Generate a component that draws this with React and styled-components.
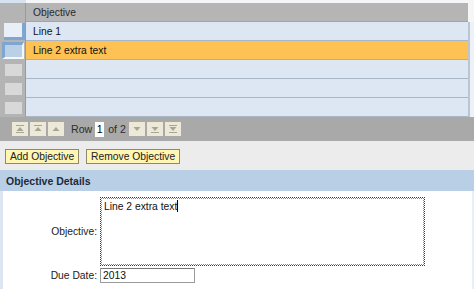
import React from "react";
import styled, { createGlobalStyle } from "styled-components";

const Global = createGlobalStyle`
  html, body { margin: 0; padding: 0; background: #ffffff; }
  body { font-family: "Liberation Sans", Arial, sans-serif; font-size: 10.3px; color: #000; }
`;

const Page = styled.div`
  width: 474px;
  height: 289px;
  overflow: hidden;
  display: flex;
  flex-direction: column;
  background: #fff;
`;

const TableWrap = styled.div`
  display: grid;
  grid-template-columns: 468px 1fr;
`;

const Table = styled.div`
  display: flex;
  flex-direction: column;
`;

const TopStrip = styled.div`
  height: 3px;
  display: grid;
  grid-template-columns: 26px 1fr;
  & > span:first-child { background: #d6e2ef; }
  & > span:last-child { background: #f4f6f8; }
`;

const Row = styled.div`
  display: grid;
  grid-template-columns: 26px 1fr;
  height: 19px;
`;

const Selector = styled.div`
  background: #b4b4b4;
  border-right: 1px solid #9a9a9a;
  display: flex;
  align-items: center;
  justify-content: flex-start;
  padding-left: 4px;
`;

const SelBox = styled.div`
  box-sizing: border-box;
  width: ${(p) => (p.$kind === "empty" ? "17px" : "22px")};
  height: ${(p) => (p.$kind === "empty" ? "12px" : "17px")};
  margin-left: ${(p) => (p.$kind === "empty" ? "1px" : p.$kind === "sel" ? "-2px" : "0")};
  background: ${(p) =>
    p.$kind === "empty" ? "#d8d8d8" : p.$kind === "sel" ? "#b9d0e6" : "#e9eff7"};
  border-right: ${(p) => (p.$kind === "first" ? "3px solid #7ea6d1" : p.$kind === "sel" ? "2px solid #f4f8fc" : "none")};
  border-bottom: ${(p) => (p.$kind === "first" ? "3px solid #7ea6d1" : p.$kind === "sel" ? "2px solid #f4f8fc" : "none")};
  border-left: ${(p) => (p.$kind === "sel" ? "3px solid #7ea6d1" : "none")};
  border-top: ${(p) => (p.$kind === "sel" ? "3px solid #7ea6d1" : "none")};
`;

const HeaderCell = styled.div`
  background: #b5b5b5;
  color: #2a2a2a;
  display: flex;
  align-items: center;
  padding-left: 7px;
  border-bottom: 1px solid #a4a4a4;
`;

const Cell = styled.div`
  background: ${(p) => (p.$selected ? "#fdc253" : "#dde7f4")};
  border-bottom: 1px solid ${(p) => (p.$selected ? "#e0a944" : "#a9b6c6")};
  display: flex;
  align-items: center;
  padding-left: 7px;
  color: #111;
`;

const RightEdge = styled.div`
  display: flex;
  flex-direction: column;
  & > div:first-child { height: 22px; background: #f6f6f6; }
  & > div:last-child { flex: 1; background: #eef2f7; border-left: 2px solid #b9c5d3; }
`;

const Toolbar = styled.div`
  height: 24px;
  background: #a9a9a9;
  display: flex;
  align-items: center;
  padding-left: 12px;
  gap: 2px;
  color: #2e2e2e;
`;

const NavBtn = styled.div`
  width: 16px;
  height: 14px;
  background: #ece9d8;
  display: flex;
  align-items: center;
  justify-content: center;
`;

const RowLabel = styled.span`
  margin-left: 5px;
  margin-right: 1px;
  font-size: 10.6px;
`;

const RowInput = styled.span`
  background: #fff;
  width: 9px;
  height: 15px;
  display: inline-flex;
  align-items: center;
  justify-content: center;
  color: #000;
  font-size: 10.6px;
`;

const OfLabel = styled.span`
  margin-left: 2px;
  margin-right: 1px;
  font-size: 10.6px;
`;

const ActionBar = styled.div`
  height: 29px;
  background: #ececec;
  display: flex;
  align-items: center;
  padding-left: 5px;
  padding-top: 2px;
  box-sizing: border-box;
  gap: 7px;
`;

const ActionButton = styled.div`
  height: 13px;
  padding: 0 4px;
  background: #fff5b4;
  border: 1px solid #8d8a6c;
  display: flex;
  align-items: center;
  color: #222;
  font-size: 10.3px;
  line-height: 13px;
`;

const SectionHeader = styled.div`
  height: 21px;
  background: #b9cfe6;
  display: flex;
  align-items: center;
  padding-left: 6px;
  font-weight: bold;
  font-size: 10.5px;
  color: #1d2b3c;
`;

const Form = styled.div`
  flex: 1;
  border-left: 3px solid #dbe6f1;
  border-right: 2px solid #e8eef5;
  display: grid;
  grid-template-columns: 94px auto 1fr;
  grid-template-rows: auto auto;
  align-content: start;
  column-gap: 3px;
  row-gap: 2px;
  padding-top: 6px;
  align-items: center;
`;

const Label = styled.div`
  grid-column: 1;
  text-align: right;
  color: #222;
`;

const TextArea = styled.div`
  grid-column: 2;
  box-sizing: border-box;
  width: 325px;
  height: 69px;
  border: 1px dotted #3a3a3a;
  outline: 1px dotted #8a8a8a;
  outline-offset: -2px;
  padding: 2px 3px;
  color: #111;
`;

const Caret = styled.span`
  display: inline-block;
  width: 1px;
  height: 12px;
  background: #000;
  vertical-align: -2px;
`;

const DateInput = styled.div`
  grid-column: 2;
  box-sizing: border-box;
  width: 95px;
  height: 15px;
  border: 1px solid #9b9b9b;
  border-top-color: #7a7a7a;
  padding: 0 2px;
  line-height: 13px;
  color: #111;
`;

const Arrow = ({ dir, bars }) => {
  const up = dir === "up";
  return (
    <svg width="10" height="8" viewBox="0 0 10 8">
      {bars >= 1 && (
        <rect x="1" y={up ? 0 : 7} width="8" height="1" fill="#a9a596" />
      )}
      {bars >= 2 && (
        <rect x="1" y={up ? 7 : 0} width="8" height="1" fill="#a9a596" />
      )}
      <polygon
        points={up ? "5,2 8.5,6 1.5,6" : "1.5,2 8.5,2 5,6"}
        fill="#a9a596"
      />
    </svg>
  );
};

const rows = [
  { text: "Line 1", kind: "first" },
  { text: "Line 2 extra text", kind: "sel", selected: true },
  { text: "", kind: "empty" },
  { text: "", kind: "empty" },
  { text: "", kind: "empty" },
];

export default function App() {
  return (
    <>
      <Global />
      <Page>
        <TableWrap>
          <Table>
            <TopStrip>
              <span />
              <span />
            </TopStrip>
            <Row>
              <Selector />
              <HeaderCell>Objective</HeaderCell>
            </Row>
            {rows.map((r, i) => (
              <Row key={i}>
                <Selector>
                  <SelBox $kind={r.kind} />
                </Selector>
                <Cell $selected={r.selected}>{r.text}</Cell>
              </Row>
            ))}
          </Table>
          <RightEdge>
            <div />
            <div />
          </RightEdge>
        </TableWrap>
        <Toolbar>
          <NavBtn><Arrow dir="up" bars={2} /></NavBtn>
          <NavBtn><Arrow dir="up" bars={1} /></NavBtn>
          <NavBtn><Arrow dir="up" bars={0} /></NavBtn>
          <RowLabel>Row</RowLabel>
          <RowInput>1</RowInput>
          <OfLabel>of 2</OfLabel>
          <NavBtn><Arrow dir="down" bars={0} /></NavBtn>
          <NavBtn><Arrow dir="down" bars={1} /></NavBtn>
          <NavBtn><Arrow dir="down" bars={2} /></NavBtn>
        </Toolbar>
        <ActionBar>
          <ActionButton>Add Objective</ActionButton>
          <ActionButton>Remove Objective</ActionButton>
        </ActionBar>
        <SectionHeader>Objective Details</SectionHeader>
        <Form>
          <Label>Objective:</Label>
          <TextArea>
            Line 2 extra text<Caret />
          </TextArea>
          <Label>Due Date:</Label>
          <DateInput>2013</DateInput>
        </Form>
      </Page>
    </>
  );
}
